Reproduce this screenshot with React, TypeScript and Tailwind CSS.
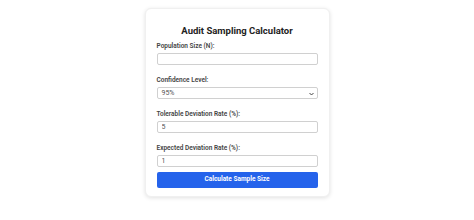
import React from "react";

export default function App() {
  const font = { fontFamily: "Roboto, 'Liberation Sans', sans-serif" };
  const label = "text-[6.5px] leading-[9px] font-semibold text-[#444] mb-[2px]";
  const input = "h-[12px] border border-[#d0d0d0] rounded-[2px] text-[7px] px-[4px] text-[#555] outline-none bg-white";
  return (
    <div className="w-[474px] h-[220px] bg-white flex justify-center pt-[8px]" style={font}>
      <div className="w-[185px] h-[189px] bg-white rounded-[6px] border border-[#f0f0f0] shadow-[0_1px_4px_rgba(0,0,0,0.12)] px-[11px] pt-[15px] pb-[9px]">
        <h1 className="text-[9.5px] leading-[13px] font-bold text-[#222] text-center mb-[5px]">Audit Sampling Calculator</h1>
        <div className="flex flex-col">
          <label className={label}>Population Size (N):</label>
          <input className={input} defaultValue="" />
          <label className={`${label} mt-[11px]`}>Confidence Level:</label>
          <div className="relative h-[12px] border border-[#d0d0d0] rounded-[2px] flex items-center px-[4px] text-[7px] text-[#555]">
            <span>95%</span>
            <svg className="absolute right-[3px] top-[3.5px]" width="5" height="4" viewBox="0 0 10 8">
              <path d="M1 2 L5 6 L9 2" stroke="#333" strokeWidth="1.8" fill="none" />
            </svg>
          </div>
          <label className={`${label} mt-[11px]`}>Tolerable Deviation Rate (%):</label>
          <input className={input} defaultValue="5" />
          <label className={`${label} mt-[11px]`}>Expected Deviation Rate (%):</label>
          <input className={input} defaultValue="1" />
          <button className="mt-[5px] h-[16px] bg-[#2563eb] rounded-[2px] text-white text-[6.5px] font-bold">Calculate Sample Size</button>
        </div>
      </div>
    </div>
  );
}
